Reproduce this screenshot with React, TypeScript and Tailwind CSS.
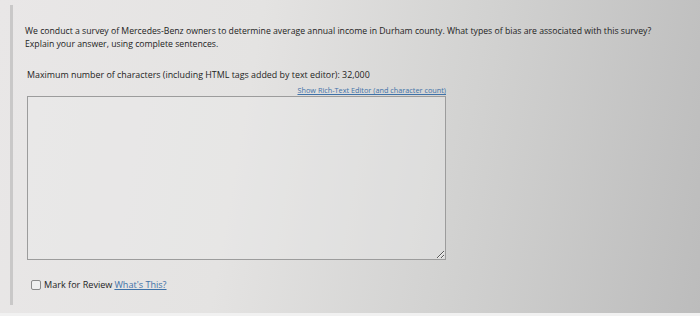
import React, { useState } from 'react';

export default function App() {
  const [answer, setAnswer] = useState('');
  const [marked, setMarked] = useState(false);

  return (
    <div
      className="w-[700px] h-[316px] overflow-hidden flex flex-col bg-[linear-gradient(100deg,#e9e7e7_0%,#e4e3e2_35%,#d2d2d1_65%,#bcbcbc_100%)] text-[#232323]"
      style={{ fontFamily: '"Open Sans", "Liberation Sans", sans-serif' }}
    >
      <div className="flex flex-1 pt-[5px]">
        {/* Left rule */}
        <div className="w-[3px] ml-[10px] h-[300px] bg-[#c9c8c8]" />

        <div className="flex-1 pl-[12px] pt-[20px]">
          {/* Question */}
          <p className="text-[8.7px] leading-[13px] font-medium pr-[30px]">
            We conduct a survey of Mercedes-Benz owners to determine average annual income in Durham county. What types of bias are associated with this survey?
            <br />
            Explain your answer, using complete sentences.
          </p>

          {/* Answer area */}
          <div className="w-[419px] mt-[17px] ml-[2px]">
            <p className="text-[8.9px] leading-[13px] font-medium">
              Maximum number of characters (including HTML tags added by text editor): 32,000
            </p>
            <div className="flex justify-end mt-[4px]">
              <a href="#" className="text-[7.3px] leading-[10px] text-[#3f72a8] underline">
                Show Rich-Text Editor (and character count)
              </a>
            </div>
            <textarea
              value={answer}
              onChange={(e) => setAnswer(e.target.value)}
              className="block w-full h-[164px] mt-[1px] border border-[#9c9c9c] bg-[#ebeaea]/40 outline-none resize-y"
            />
          </div>

          {/* Mark for review */}
          <label className="flex items-center mt-[19px] ml-[6px] text-[9.1px] leading-[12px] font-medium">
            <input
              type="checkbox"
              checked={marked}
              onChange={(e) => setMarked(e.target.checked)}
              className="appearance-none w-[10px] h-[10px] border border-[#8a8a8a] rounded-[2px] bg-[#efefef] mr-[3px]"
            />
            <span>Mark for Review</span>
            <a href="#" className="ml-[2px] text-[#3f72a8] underline">What's This?</a>
          </label>
        </div>
      </div>
      {/* Bottom edge */}
      <div className="h-[3px] bg-[#f1f1f1]" />
    </div>
  );
}
